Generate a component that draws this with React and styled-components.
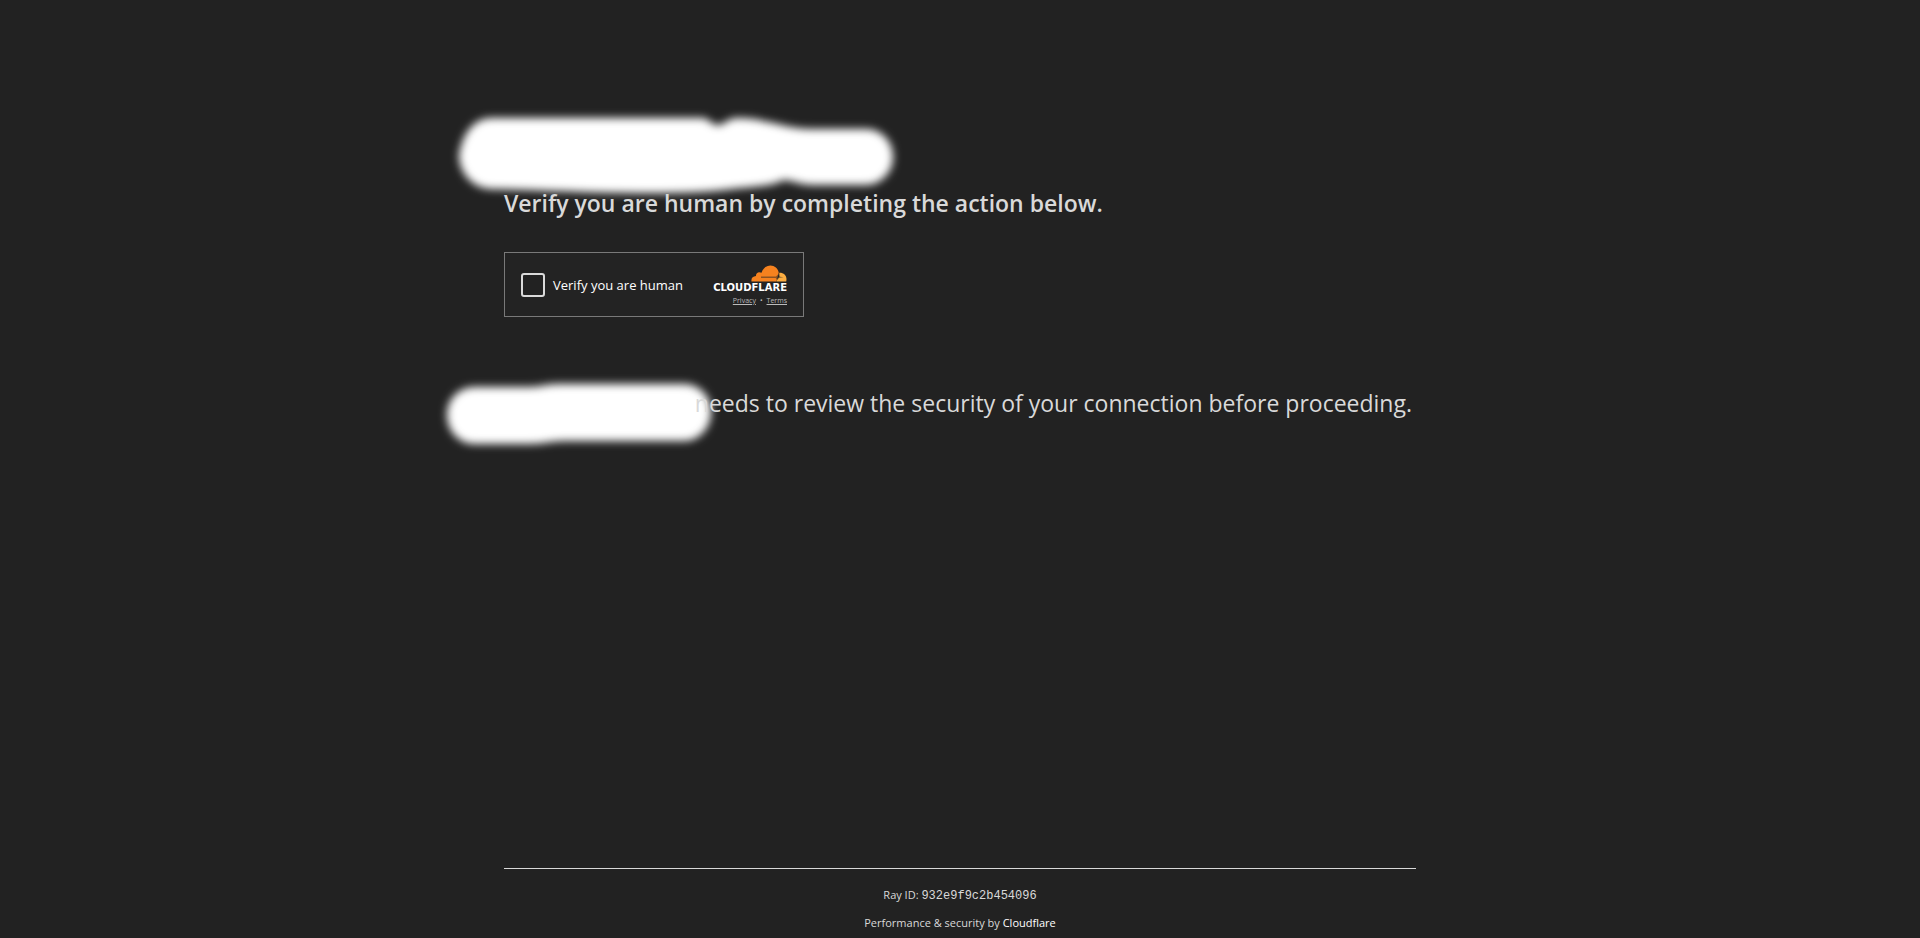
import React from "react";
import styled, { createGlobalStyle } from "styled-components";

const GlobalStyle = createGlobalStyle`
  * {
    box-sizing: border-box;
    margin: 0;
    padding: 0;
  }

  body {
    background-color: #222;
    color: #d9d9d9;
    font-family: "Open Sans", "Noto Sans", sans-serif;
  }
`;

const Page = styled.div`
  display: flex;
  flex-direction: column;
  min-height: 100vh;
`;

const Content = styled.main`
  flex: 1;
  width: 100%;
  max-width: 960px;
  margin: 0 auto;
  padding: 128px 24px 0;
`;

const SiteName = styled.div`
  position: relative;
  height: 57px;
`;

const Smudge = styled.svg`
  position: absolute;
  top: ${(props) => props.$top}px;
  left: ${(props) => props.$left}px;
  overflow: visible;
`;

const Heading = styled.h2`
  position: relative;
  font-size: 23px;
  font-weight: 600;
  line-height: 36px;
`;

const Widget = styled.div`
  display: flex;
  justify-content: space-between;
  align-items: center;
  width: 300px;
  height: 65px;
  margin: 31px 0 68px;
  padding: 0 16px;
  border: 1px solid #797979;
  background-color: #232323;
`;

const Label = styled.label`
  display: flex;
  align-items: center;
  gap: 8px;
  color: #fff;
  font-size: 13px;
  line-height: 20px;
`;

const Checkbox = styled.input`
  appearance: none;
  width: 24px;
  height: 24px;
  border: 2px solid #dadada;
  border-radius: 3px;
  background-color: #222;
`;

const Brand = styled.div`
  display: flex;
  flex-direction: column;
  align-items: flex-end;
  gap: 4px;
`;

const Links = styled.div`
  display: flex;
  gap: 4px;
  color: #bbb;
  font-size: 7px;
  line-height: 10px;
`;

const SmallLink = styled.a`
  color: #bbb;
  text-decoration: underline;
`;

const Review = styled.div`
  display: flex;
  justify-content: flex-end;
  position: relative;
  padding-right: 4px;
  font-size: 23px;
  line-height: 36px;
`;

const ReviewText = styled.p`
  position: relative;
`;

const Footer = styled.footer`
  width: 100%;
  max-width: 912px;
  margin: 0 auto;
  padding: 17px 0 6px;
  border-top: 1px solid #d9d9d9;
  font-size: 11px;
  line-height: 18px;
  text-align: center;
`;

const FooterLine = styled.div`
  margin-bottom: 9px;

  &:last-child {
    margin-bottom: 0;
  }
`;

const RayId = styled.code`
  font-family: "Liberation Mono", monospace;
  font-size: 12px;
`;

const FooterLink = styled.a`
  color: #fff;
  text-decoration: none;
`;

const Logo = () => (
  <svg width="74" height="28" viewBox="0 0 74 28" role="img">
    <path
      fill="#f6821f"
      d="M38.500 17.500c-.5-3.400 1.300-5.300 4.500-5.500-.3-3.200 2.800-4.900 5.500-3.200C50 4.200 53.400 1.500 57.300 1.500c4.400 0 7.700 2.900 8.400 7.100l-.7 3.200-1.700 5.700z"
    />
    <path
      fill="#fbad41"
      d="M66.200 8.700c4.300-.2 7.300 2.600 7.300 6.400 0 .9-.1 1.700-.3 2.400h-9.700c.3-2.200 1.300-3.700 3-4.400z"
    />
    <path
      fill="#232323"
      d="M48 12.600h15l2-2.200 1 2.200 4.500.6-4.500.8-1.800 2.200-1.500-2.200H48z"
      opacity=".5"
    />
    <text
      x="74"
      y="27"
      textAnchor="end"
      fill="#fff"
      fontFamily="DejaVu Sans, sans-serif"
      fontSize="10"
      fontWeight="700"
    >
      CLOUDFLARE
    </text>
  </svg>
);

const App = () => {
  return (
    <>
      <GlobalStyle />
      <Page>
        <Content>
          <SiteName>
            <Smudge $top={-27} $left={-64} width="480" height="130">
              <defs>
                <filter id="soft" x="-10%" y="-30%" width="120%" height="160%">
                  <feGaussianBlur stdDeviation="4" />
                </filter>
              </defs>
              <path
                fill="#fff"
                filter="url(#soft)"
                d="M52 17H262C269 17 271 24 278 24C284 24 288 17 298 17C325 17 345 28 372 28H426C441 28 453 40 453 56C453 72 440 84 426 84H372C362 84 350 79 343 79C332 86 312 85 292 88C265 92 230 92 200 92C150 92 100 89 52 88C34 88 19 73 19 54C22 34 33 17 52 17Z"
              />
            </Smudge>
          </SiteName>
          <Heading>Verify you are human by completing the action below.</Heading>
          <Widget>
            <Label>
              <Checkbox type="checkbox" />
              Verify you are human
            </Label>
            <Brand>
              <Logo />
              <Links>
                <SmallLink href="#privacy">Privacy</SmallLink>
                <span>•</span>
                <SmallLink href="#terms">Terms</SmallLink>
              </Links>
            </Brand>
          </Widget>
          <Review>
            <Smudge $top={-15} $left={-74} width="300" height="90">
              <path
                fill="#fff"
                filter="url(#soft)"
                d="M45 17H100C112 17 115 14 128 14H254C269 14 281 26 281 42C281 58 269 71 254 71H134C120 71 115 74 100 74H45C29 74 17 61 17 45C17 29 29 17 45 17Z"
              />
            </Smudge>
            <ReviewText>
              needs to review the security of your connection before proceeding.
            </ReviewText>
          </Review>
        </Content>
        <Footer>
          <FooterLine>
            Ray ID: <RayId>932e9f9c2b454096</RayId>
          </FooterLine>
          <FooterLine>
            Performance &amp; security by{" "}
            <FooterLink href="#cloudflare">Cloudflare</FooterLink>
          </FooterLine>
        </Footer>
      </Page>
    </>
  );
};

export default App;
